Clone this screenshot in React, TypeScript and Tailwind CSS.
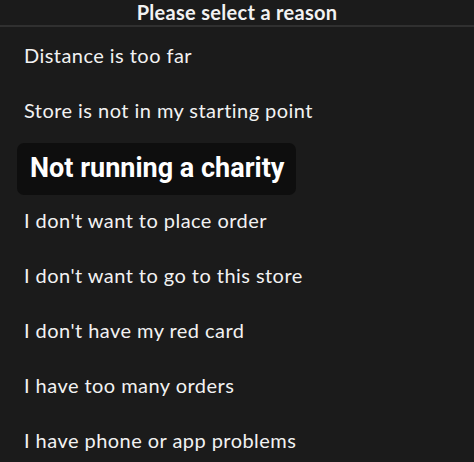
const reasons = [
  "Distance is too far",
  "Store is not in my starting point",
  null,
  "I don't want to place order",
  "I don't want to go to this store",
  "I don't have my red card",
  "I have too many orders",
  "I have phone or app problems",
];

const App = () => {
  return (
    <div className="w-[474px] h-[462px] overflow-hidden bg-[#1b1b1b] text-[#f2f2f2] font-['Lato','Open_Sans',sans-serif]">
      {/* Header */}
      <div className="h-[27px] border-b-2 border-[#303030] flex items-center justify-center">
        <span className="text-[20px] font-bold leading-none tracking-[0.3px] -mt-[1px]">
          Please select a reason
        </span>
      </div>

      {/* Reasons */}
      <div className="flex flex-col">
        {reasons.map((r, i) =>
          r ? (
            <div key={i} className="h-[55px] flex items-center pl-[24px] text-[20px] tracking-[0.45px] whitespace-nowrap">
              {r}
            </div>
          ) : (
            <div key={i} className="h-[55px] flex items-center pl-[17px]">
              <div className="translate-y-[4px] h-[52px] w-[279px] rounded-[7px] bg-[#0e0e0e] flex items-center px-[13px] font-['Roboto',sans-serif] font-bold text-[27px] text-white whitespace-nowrap">
                Not running a charity
              </div>
            </div>
          )
        )}
      </div>
    </div>
  );
};

export default App;
